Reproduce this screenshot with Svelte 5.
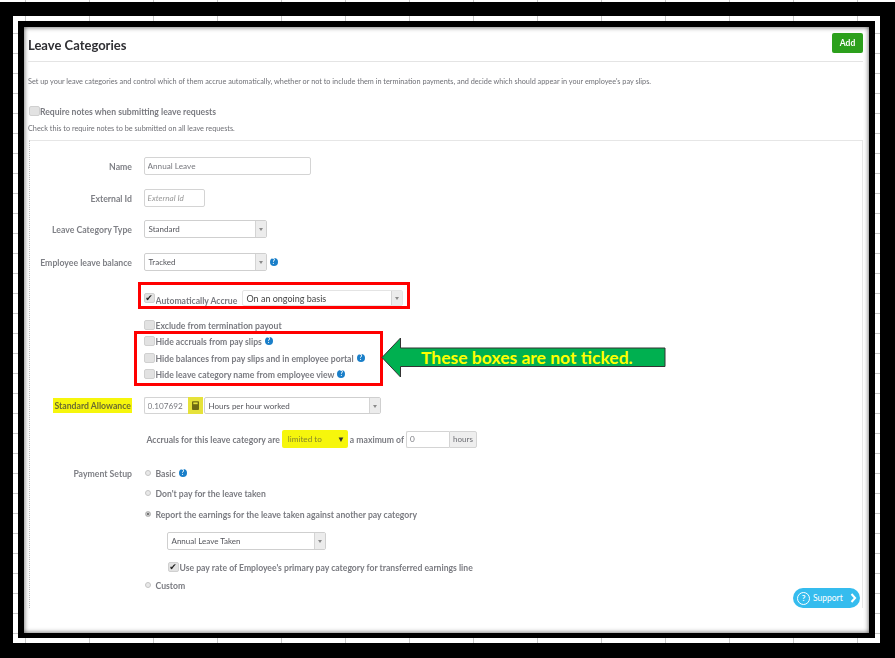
<script>
  const hideRows = [
    { label: 'Exclude from termination payout', help: false, cls: 'mt-exclude' },
    { label: 'Hide accruals from pay slips', help: true, cls: 'mt-2' },
    { label: 'Hide balances from pay slips and in employee portal', help: true, cls: 'mt-3' },
    { label: 'Hide leave category name from employee view', help: true, cls: 'mt-2' },
  ];
</script>

<div class="sheet">
  <div class="outer">
    <div class="inner">
      <div class="card">
        <div class="content">
          <header class="head">
            <h1>Leave Categories</h1>
            <button class="add">Add</button>
          </header>

          <p class="desc">Set up your leave categories and control which of them accrue automatically, whether or not to include them in termination payments, and decide which should appear in your employee's pay slips.</p>

          <div class="notes">
            <span class="box"></span>
            <span class="strong">Require notes when submitting leave requests</span>
          </div>
          <p class="hint">Check this to require notes to be submitted on all leave requests.</p>

          <section class="panel">
            <div class="row">
              <span class="label">Name</span>
              <input class="text name" value="Annual Leave" />
            </div>
            <div class="row mt-14">
              <span class="label">External Id</span>
              <input class="text ext" placeholder="External Id" />
            </div>
            <div class="row mt-13">
              <span class="label">Leave Category Type</span>
              <div class="select w123"><span>Standard</span><i class="caret"></i></div>
            </div>
            <div class="row mt-15">
              <span class="label">Employee leave balance</span>
              <div class="field">
                <div class="select w123"><span>Tracked</span><i class="caret"></i></div>
                <span class="help">?</span>
              </div>
            </div>

            <div class="row auto">
              <span></span>
              <div class="field">
                <span class="box on">✔</span>
                <span class="strong auto-label">Automatically Accrue</span>
                <div class="select ongoing"><span>On an ongoing basis</span><i class="caret"></i></div>
              </div>
            </div>

            {#each hideRows as row}
              <div class="row check {row.cls}">
                <span></span>
                <div class="field">
                  <span class="box"></span>
                  <span class="strong">{row.label}</span>
                  {#if row.help}<span class="help">?</span>{/if}
                </div>
              </div>
            {/each}

            <div class="row allowance">
              <span class="label"><mark>Standard Allowance</mark></span>
              <div class="field tight">
                <input class="text amount" value="0.107692" />
                <span class="calc"><svg width="7" height="9" viewBox="0 0 8 10"><rect width="8" height="10" rx="1" fill="#6d6a12"/><rect x="1.500" y="1.500" width="5" height="2" fill="#e6e23a"/></svg></span>
                <div class="select hours"><span>Hours per hour worked</span><i class="caret"></i></div>
              </div>
            </div>

            <div class="row accruals">
              <span></span>
              <div class="field">
                <span class="strong">Accruals for this leave category are</span>
                <div class="limited"><span>limited to</span><b>▼</b></div>
                <span class="strong">a maximum of</span>
                <div class="field tight">
                  <input class="text max" value="0" />
                  <span class="addon">hours</span>
                </div>
              </div>
            </div>

            <div class="row check pay">
              <span class="label">Payment Setup</span>
              <div class="field radio-row">
                <span class="radio"></span>
                <span class="strong">Basic</span>
                <span class="help">?</span>
              </div>
            </div>
            <div class="row check mt-6">
              <span></span>
              <div class="field radio-row">
                <span class="radio"></span>
                <span class="strong">Don't pay for the leave taken</span>
              </div>
            </div>
            <div class="row check mt-7">
              <span></span>
              <div class="field radio-row">
                <span class="radio on"></span>
                <span class="strong">Report the earnings for the leave taken against another pay category</span>
              </div>
            </div>
            <div class="row nested mt-11">
              <span></span>
              <div class="select taken"><span>Annual Leave Taken</span><i class="caret"></i></div>
            </div>
            <div class="row check nested mt-10">
              <span></span>
              <div class="field primary">
                <span class="box on">✔</span>
                <span class="strong">Use pay rate of Employee's primary pay category for transferred earnings line</span>
              </div>
            </div>
            <div class="row check mt-4">
              <span></span>
              <div class="field radio-row">
                <span class="radio"></span>
                <span class="strong">Custom</span>
              </div>
            </div>
          </section>
        </div>

        <button class="support">
          <span class="support-icon">?</span>
          <span>Support</span>
          <svg width="7" height="10" viewBox="0 0 7 10"><path d="M1.500 1l3.600 4-3.600 4" fill="none" stroke="#fff" stroke-width="2"/></svg>
        </button>
      </div>
    </div>
  </div>

  <div class="redbox first"></div>
  <div class="redbox second"></div>
  <div class="callout">
    <svg width="285" height="41" viewBox="0 0 285 41">
      <path d="M1 20.500 L19.500 1 V11 H284 V29.500 H19.500 V40 Z" fill="#00b050" stroke="#333" stroke-width="1"/>
    </svg>
    <span>These boxes are not ticked.</span>
  </div>
</div>

<style>
  :global(body) {
    margin: 0;
    background: #fff;
  }

  .sheet {
    position: relative;
    width: 895px;
    height: 658px;
    box-sizing: border-box;
    padding-top: 2px;
    overflow: hidden;
    background-color: #fff;
    background-image:
      repeating-linear-gradient(to right, transparent 0 25px, #c9c9c9 25px 26px, transparent 26px 64px),
      repeating-linear-gradient(to bottom, transparent 0 13px, #c9c9c9 13px 14px, transparent 14px 20px);
    font-family: Lato, "Open Sans", sans-serif;
    color: #6b6c72;
  }

  .outer {
    height: 100%;
    box-sizing: border-box;
    border-style: solid;
    border-color: #000;
    border-width: 14px 15px 15px 13px;
    padding: 5px;
  }

  .inner {
    height: 100%;
    box-sizing: border-box;
    border: 6px solid #000;
    border-bottom-width: 5px;
  }

  .card {
    position: relative;
    height: 100%;
    background: #fff;
    box-shadow: inset 0 0 5px #555;
    overflow: hidden;
  }

  .content {
    padding: 6px 6px 0 4px;
    filter: blur(0.5px);
  }

  .head {
    display: flex;
    align-items: flex-start;
    justify-content: space-between;
    height: 28px;
    border-bottom: 1px solid #e4e4e4;
  }

  h1 {
    margin: 4px 0 0;
    font-size: 13px;
    line-height: 16px;
    font-weight: 700;
    color: #2f2f33;
  }

  .add {
    width: 31px;
    height: 20px;
    padding: 0;
    border: 0;
    border-radius: 2px;
    background: #2ca01c;
    color: #fff;
    font: 700 8.500px Lato, sans-serif;
  }

  .desc {
    margin: 15px 0 0;
    font-size: 7.300px;
    line-height: 9px;
    white-space: nowrap;
    color: #6f7076;
  }

  .notes {
    display: flex;
    align-items: center;
    height: 12px;
    margin: 19px 0 0 1px;
  }

  .hint {
    margin: 7px 0 0;
    font-size: 7.300px;
    line-height: 9px;
    color: #6f7076;
  }

  .panel {
    margin: 7px 0 0 1px;
    height: 468px;
    box-sizing: border-box;
    padding-top: 16px;
    border-top: 1px solid #e6e6e6;
    border-right: 1px solid #e6e6e6;
    border-left: 1px dotted #bbb;
  }

  .row {
    display: grid;
    grid-template-columns: 102px 1fr;
    column-gap: 11.500px;
    align-items: center;
    height: 18px;
  }

  .label {
    text-align: right;
    font-size: 8.700px;
    font-weight: 700;
    color: #7f8086;
    white-space: nowrap;
  }

  .strong {
    font-size: 8.650px;
    font-weight: 700;
    white-space: nowrap;
    color: #7a7b81;
  }

  .field {
    display: flex;
    align-items: center;
    gap: 1px;
  }

  .tight {
    gap: 0;
  }

  .text {
    box-sizing: border-box;
    height: 18px;
    padding: 0 3px;
    border: 1px solid #d4d4d4;
    border-radius: 2px;
    outline: none;
    background: #fff;
    font: 8.200px Lato, sans-serif;
    color: #77787e;
  }

  .text::placeholder {
    font-style: italic;
    color: #9a9a9a;
  }

  .name {
    width: 167px;
  }

  .ext {
    width: 61px;
  }

  .select {
    display: flex;
    align-items: center;
    justify-content: space-between;
    box-sizing: border-box;
    height: 18px;
    padding-left: 4px;
    border: 1px solid #cfcfcf;
    border-radius: 2px;
    background: #fff;
    font-size: 8px;
    color: #55565c;
    white-space: nowrap;
  }

  .caret {
    position: relative;
    align-self: stretch;
    width: 10px;
    border-left: 1px solid #d4d4d4;
    background: #ececec;
  }

  .caret::after {
    content: '';
    position: absolute;
    left: 3px;
    top: 50%;
    margin-top: -1px;
    border: 2px solid transparent;
    border-top: 3px solid #8a8a8a;
    border-bottom: 0;
  }

  .w123 {
    width: 123px;
  }

  .help {
    display: inline-flex;
    align-items: center;
    justify-content: center;
    flex: none;
    width: 8px;
    height: 8px;
    margin-left: 2px;
    border-radius: 50%;
    background: #1a7fc9;
    color: #fff;
    font-size: 6.500px;
    font-weight: 700;
    line-height: 1;
  }

  .box {
    display: inline-flex;
    align-items: center;
    justify-content: center;
    flex: none;
    box-sizing: border-box;
    width: 11px;
    height: 10px;
    border: 1px solid #d0d0d0;
    border-radius: 2px;
    background: #e2e2e2;
    color: #222;
    font: 9px "DejaVu Sans", sans-serif;
    line-height: 1;
  }

  .auto {
    height: 16px;
    margin-top: 19px;
  }

  .auto-label {
    align-self: flex-end;
    width: 85px;
    overflow: hidden;
  }

  .ongoing {
    width: 161px;
    height: 16px;
    border-color: #e4e4e4;
    font-size: 9px;
    color: #444;
  }

  .check {
    height: 14px;
  }

  .mt-exclude {
    margin-top: 12px;
  }

  .mt-2 {
    margin-top: 2px;
  }

  .mt-3 {
    margin-top: 3px;
  }

  .mt-4 {
    margin-top: 4px;
  }

  .mt-6 {
    margin-top: 6px;
  }

  .mt-7 {
    margin-top: 7px;
  }

  .mt-10 {
    margin-top: 10px;
  }

  .mt-11 {
    margin-top: 11px;
  }

  .mt-13 {
    margin-top: 13px;
  }

  .mt-14 {
    margin-top: 14px;
  }

  .mt-15 {
    margin-top: 15px;
  }

  .allowance {
    height: 17px;
    margin-top: 16px;
  }

  mark {
    display: inline-block;
    padding: 2px 1px;
    background: #f6f60c;
    color: #6c6c30;
  }

  .amount {
    width: 44px;
    height: 17px;
    border-radius: 2px 0 0 2px;
    border-right: 0;
  }

  .calc {
    display: flex;
    align-items: center;
    justify-content: center;
    width: 15px;
    height: 17px;
    background: #e6e23a;
  }

  .hours {
    width: 177px;
    height: 17px;
    margin-left: 1px;
  }

  .accruals {
    margin-top: 16px;
    padding-left: 3px;
  }

  .accruals .field {
    gap: 2px;
  }

  .limited {
    display: flex;
    align-items: center;
    justify-content: space-between;
    box-sizing: border-box;
    width: 66px;
    height: 18px;
    padding: 0 3px 0 6px;
    border-radius: 2px;
    background: #f6f60c;
    font-size: 8.200px;
    color: #86862a;
  }

  .limited b {
    font-size: 8px;
    color: #333;
  }

  .accruals .tight {
    gap: 0;
  }

  .max {
    width: 43px;
    height: 17px;
    border-radius: 2px 0 0 2px;
    border-right: 0;
  }

  .addon {
    box-sizing: border-box;
    width: 28px;
    height: 17px;
    border: 1px solid #d4d4d4;
    border-radius: 0 2px 2px 0;
    background: #eee;
    font-size: 8px;
    line-height: 15px;
    text-align: center;
  }

  .pay {
    margin-top: 18px;
  }

  .radio-row {
    gap: 5px;
    padding-left: 1px;
  }

  .radio-row .help {
    margin-left: -2px;
  }

  .radio {
    flex: none;
    box-sizing: border-box;
    width: 6px;
    height: 6px;
    border: 1px solid #c4c4c4;
    border-radius: 50%;
    background: #e8e8e8;
  }

  .radio.on {
    background: #555;
    box-shadow: inset 0 0 0 1px #ddd;
  }

  .nested {
    padding-left: 23px;
  }

  .taken {
    width: 159px;
  }

  .primary {
    padding-left: 1px;
  }

  .support {
    position: absolute;
    right: 9px;
    bottom: 25px;
    display: flex;
    align-items: center;
    gap: 3px;
    box-sizing: border-box;
    width: 67px;
    height: 20px;
    padding: 0 0 0 4px;
    border: 0;
    border-radius: 10px;
    background: #35bcee;
    color: #fff;
    font: 400 8.500px Lato, sans-serif;
  }

  .support svg {
    margin-left: 4px;
  }

  .support-icon {
    display: flex;
    align-items: center;
    justify-content: center;
    box-sizing: border-box;
    width: 13px;
    height: 13px;
    border: 1.500px solid #fff;
    border-radius: 50%;
    font-size: 8px;
    font-weight: 700;
  }

  .redbox {
    position: absolute;
    box-sizing: border-box;
    border: 3px solid #f00;
    pointer-events: none;
  }

  .first {
    left: 138px;
    top: 282px;
    width: 272px;
    height: 27px;
  }

  .second {
    left: 134px;
    top: 331px;
    width: 249px;
    height: 55px;
  }

  .callout {
    position: absolute;
    left: 381px;
    top: 337px;
    width: 285px;
    height: 41px;
  }

  .callout svg {
    display: block;
  }

  .callout span {
    position: absolute;
    left: 40px;
    top: 11px;
    font: 700 17.500px/20px Lato, "Liberation Sans", sans-serif;
    color: #ff0;
    white-space: nowrap;
  }
</style>
